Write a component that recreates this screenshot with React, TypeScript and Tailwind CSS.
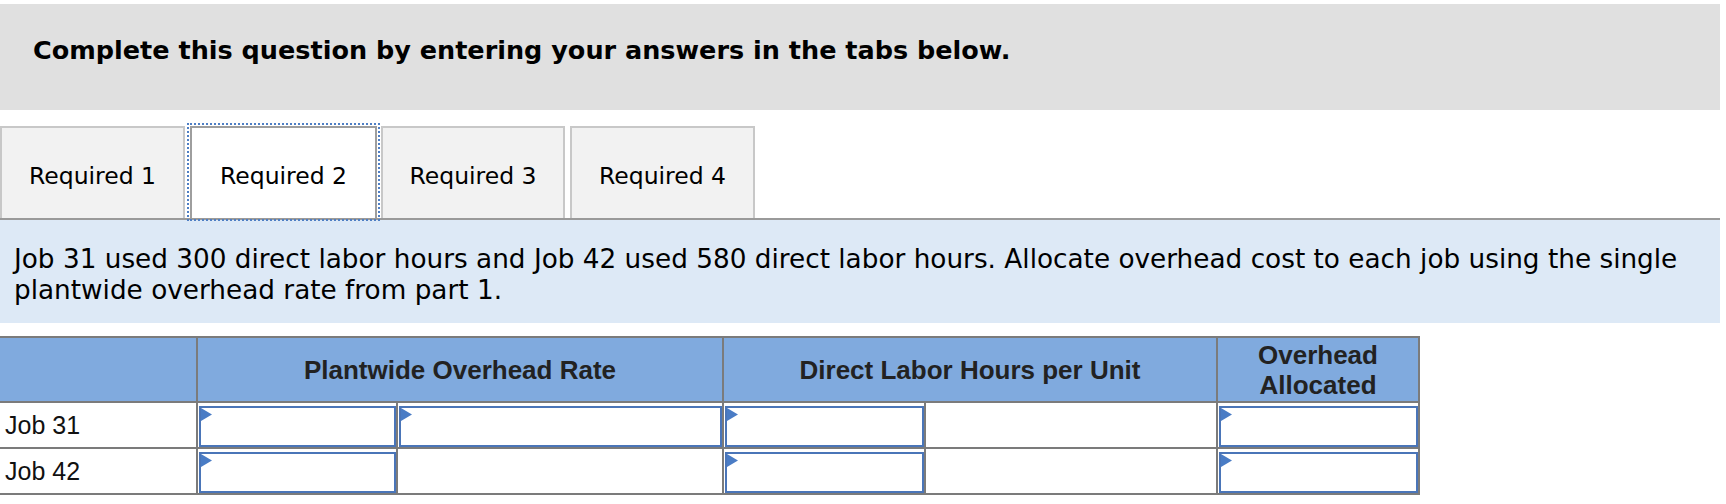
import React from 'react';

const verdana = { fontFamily: '"DejaVu Sans", Verdana, sans-serif' };

const Field: React.FC = () => (
    <div className="relative h-full w-full border-2 border-[#4a75b8] bg-white">
        <svg className="absolute left-0 top-0" width="11" height="13" viewBox="0 0 11 13">
            <polygon points="0,0 11,6.5 0,13" fill="#4a7cc5" />
        </svg>
    </div>
);

const Cell: React.FC<{ w: string; input?: boolean }> = ({ w, input }) => (
    <div className={`${w} h-full border-r-2 border-[#7b7b7b] pt-[3px] pl-px`}>
        {input ? <Field /> : null}
    </div>
);

const tabs = ['Required 1', 'Required 2', 'Required 3', 'Required 4'];

export default function App() {
    return (
        <div className="w-[1726px] h-[504px] bg-white overflow-hidden text-black">
            <div className="mt-[4px] w-[1720px] h-[106px] bg-[#e0e0e0] pt-[31px] pl-[33px]">
                <h2 className="text-[25.5px] leading-[30px] font-bold" style={verdana}>
                    Complete this question by entering your answers in the tabs below.
                </h2>
            </div>

            <div className="mt-[16px] flex items-end h-[94px] w-[1720px] border-b-2 border-[#9a9a9a]" style={verdana}>
                {tabs.map((t, i) => {
                    const active = i === 1;
                    const pos = ['w-[185px]', 'ml-[5px] w-[187px]', 'ml-[4px] w-[184px]', 'ml-[5px] w-[185px]'][i];
                    return (
                        <div
                            key={t}
                            className={
                                active
                                    ? `${pos} h-full flex items-center justify-center pt-[5px] border-2 border-b-0 border-[#9e9e9e] bg-white outline-2 outline-dotted outline-offset-[1px] outline-[#4f7fc4]`
                                    : `${pos} h-full flex items-center justify-center pt-[5px] border-2 border-b-0 border-[#c8c8c8] bg-[#f2f2f2]`
                            }
                        >
                            <span className="text-[23.5px] leading-[26px]">{t}</span>
                        </div>
                    );
                })}
            </div>

            <div className="w-[1720px] h-[103px] bg-[#dde9f6] pt-[24px] pl-[14px]" style={verdana}>
                <p className="text-[26.3px] leading-[31px] whitespace-nowrap">
                    Job 31 used 300 direct labor hours and Job 42 used 580 direct labor hours. Allocate overhead cost to each job using the single
                    <br />
                    plantwide overhead rate from part 1.
                </p>
            </div>

            <div className="mt-[13px] w-[1420px] border-t-2 border-[#7b7b7b]" style={{ fontFamily: '"Liberation Sans", Arial, sans-serif' }}>
                <div className="flex h-[65px] border-b-2 border-[#7b7b7b] bg-[#80aade] text-[26px] leading-[30px] font-bold text-[#222]">
                    <div className="w-[198px] h-full border-r-2 border-[#7b7b7b]" />
                    <div className="w-[526px] h-full border-r-2 border-[#7b7b7b] flex items-center justify-center">Plantwide Overhead Rate</div>
                    <div className="w-[494px] h-full border-r-2 border-[#7b7b7b] flex items-center justify-center">Direct Labor Hours per Unit</div>
                    <div className="w-[202px] h-full border-r-2 border-[#7b7b7b] flex flex-col items-center justify-center text-center">
                        <span>Overhead</span>
                        <span>Allocated</span>
                    </div>
                </div>
                {[
                    { label: 'Job 31', second: true },
                    { label: 'Job 42', second: false },
                ].map((row) => (
                    <div key={row.label} className="flex h-[46px] border-b-2 border-[#7b7b7b]">
                        <div className="w-[198px] h-full border-r-2 border-[#7b7b7b] flex items-center pl-[5px] text-[25px] leading-[30px] text-[#111]">
                            {row.label}
                        </div>
                        <Cell w="w-[200px]" input />
                        <Cell w="w-[326px]" input={row.second} />
                        <Cell w="w-[202px]" input />
                        <Cell w="w-[292px]" />
                        <Cell w="w-[202px]" input />
                    </div>
                ))}
            </div>
        </div>
    );
}
